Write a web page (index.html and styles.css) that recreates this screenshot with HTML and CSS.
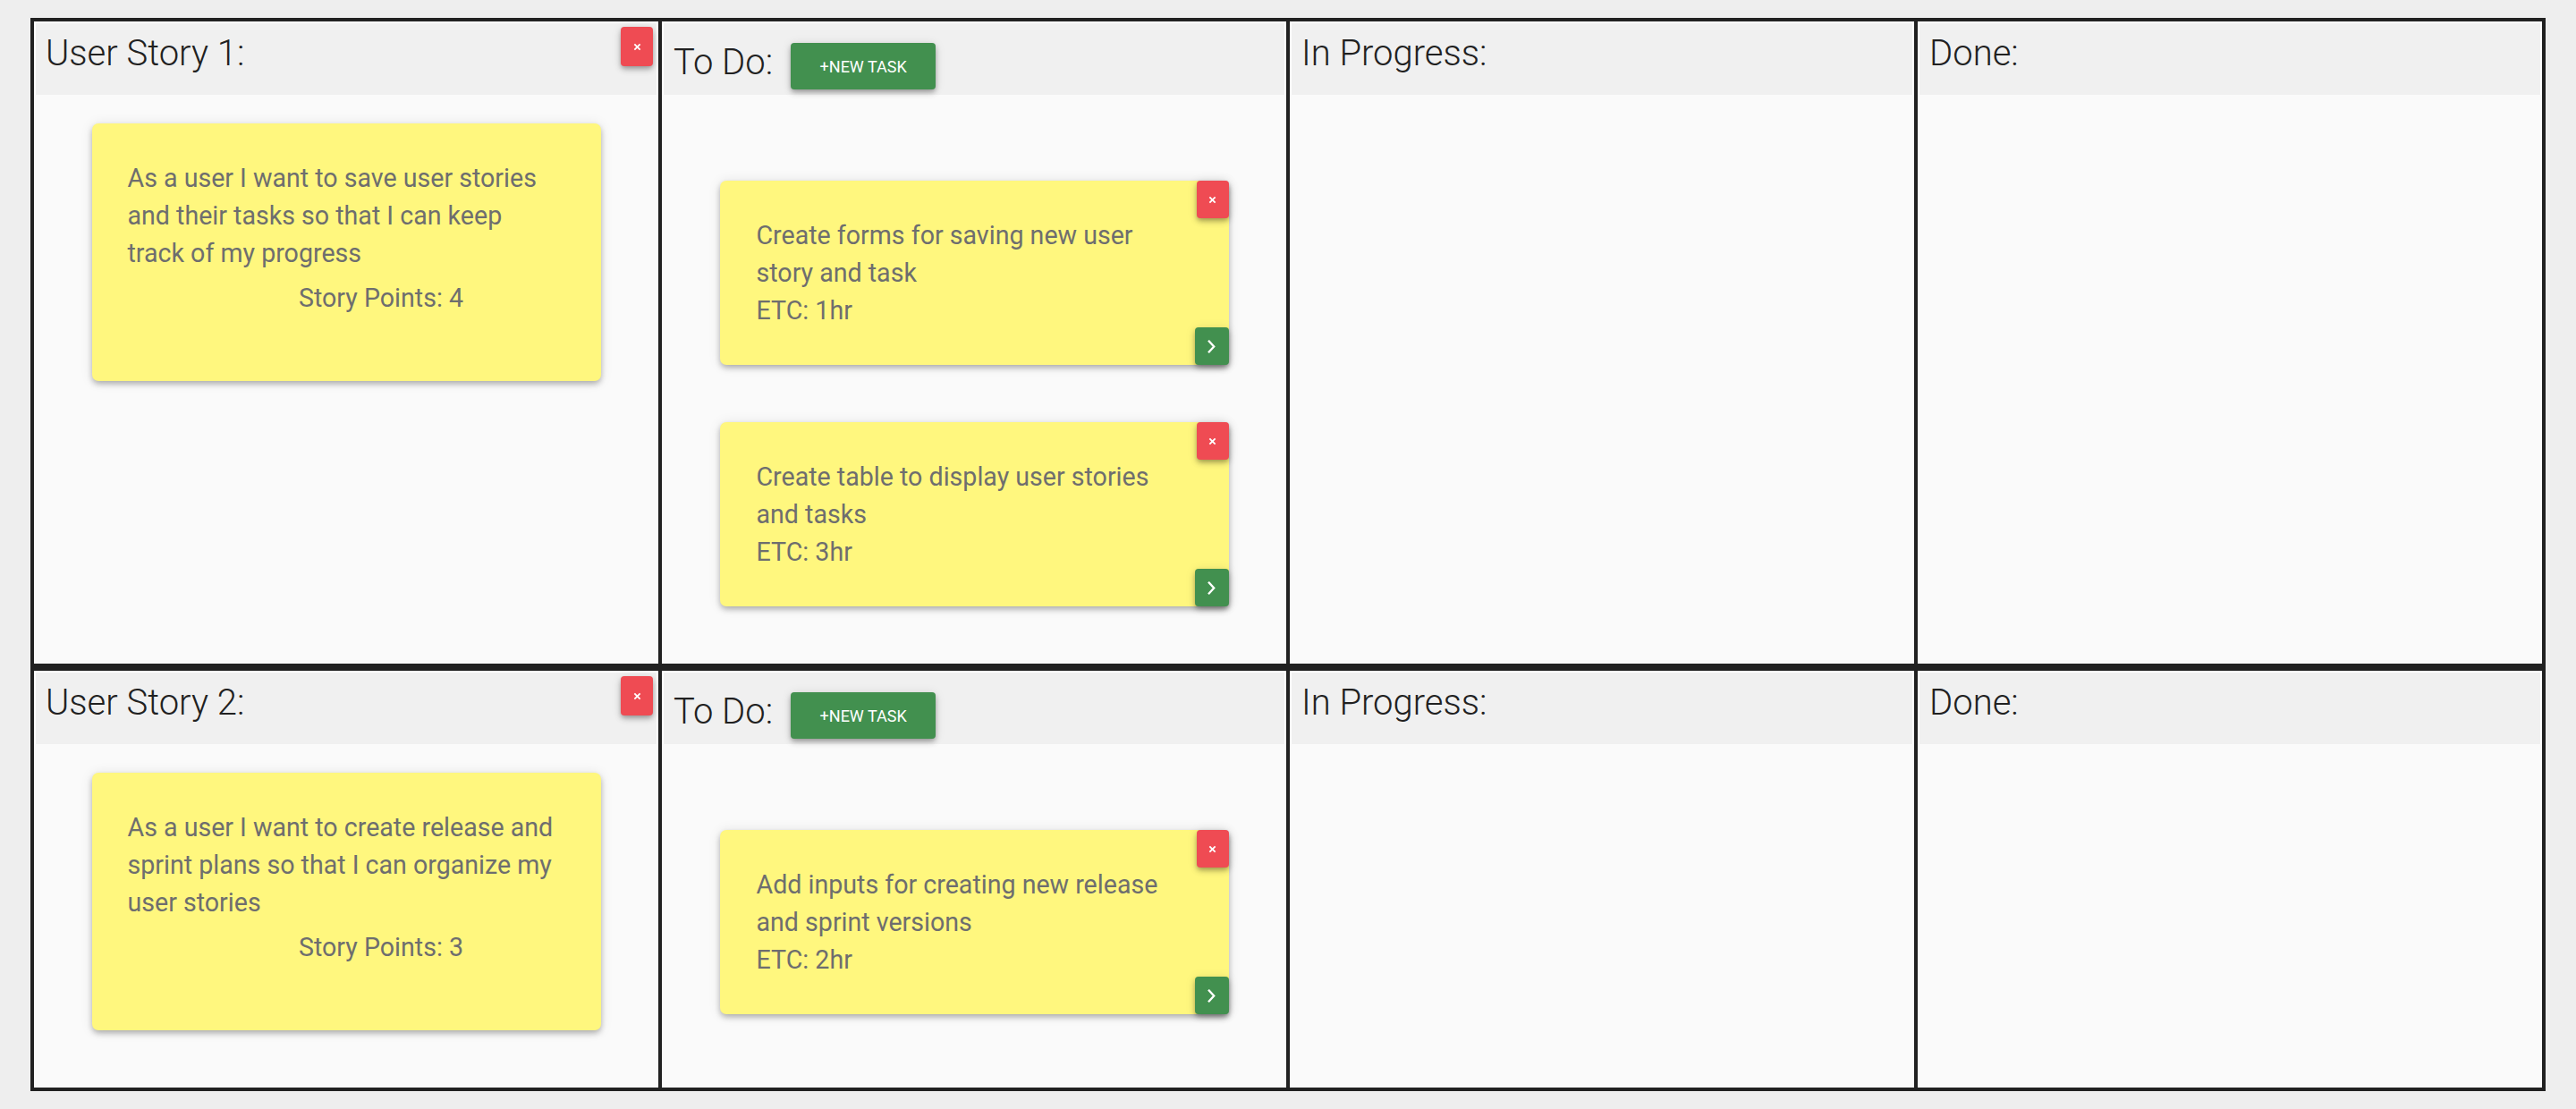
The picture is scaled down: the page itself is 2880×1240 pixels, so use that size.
FILE: index.html
```html
<!DOCTYPE html>
<html lang="en">
<head>
<meta charset="utf-8">
<title>Scrum Board</title>
<link rel="stylesheet" href="styles.css">
</head>
<body>
<main class="board">
  <section class="row">
    <div class="cell">
      <div class="head"><h2 class="title">User Story 1:</h2></div>
      <button class="btn-del story-del" aria-label="delete"><svg viewBox="0 0 10 10" class="ico-x"><path d="M1.5 1.5 L8.5 8.5 M8.5 1.5 L1.5 8.5"/></svg></button>
      <div class="story-body">
        <div class="card story">
          <p class="story-text">As a user I want to save user stories and their tasks so that I can keep track of my progress</p>
          <p class="points">Story Points: 4</p>
        </div>
      </div>
    </div>
    <div class="cell">
      <div class="head head-todo"><h2 class="title">To Do:</h2><button class="btn-new">+NEW TASK</button></div>
      <div class="todo-body">
        <div class="card task">
          <p class="task-text">Create forms for saving new user story and task</p>
          <p class="task-text">ETC: 1hr</p>
          <button class="btn-del task-del" aria-label="delete"><svg viewBox="0 0 10 10" class="ico-x"><path d="M1.5 1.5 L8.5 8.5 M8.5 1.5 L1.5 8.5"/></svg></button>
          <button class="btn-move" aria-label="move"><svg viewBox="0 0 10 16" class="ico-chev"><path d="M2 1.5 L8 8 L2 14.5"/></svg></button>
        </div>
        <div class="card task">
          <p class="task-text">Create table to display user stories and tasks</p>
          <p class="task-text">ETC: 3hr</p>
          <button class="btn-del task-del" aria-label="delete"><svg viewBox="0 0 10 10" class="ico-x"><path d="M1.5 1.5 L8.5 8.5 M8.5 1.5 L1.5 8.5"/></svg></button>
          <button class="btn-move" aria-label="move"><svg viewBox="0 0 10 16" class="ico-chev"><path d="M2 1.5 L8 8 L2 14.5"/></svg></button>
        </div>
      </div>
    </div>
    <div class="cell">
      <div class="head"><h2 class="title">In Progress:</h2></div>
    </div>
    <div class="cell">
      <div class="head"><h2 class="title">Done:</h2></div>
    </div>
  </section>

  <section class="row">
    <div class="cell">
      <div class="head"><h2 class="title">User Story 2:</h2></div>
      <button class="btn-del story-del" aria-label="delete"><svg viewBox="0 0 10 10" class="ico-x"><path d="M1.5 1.5 L8.5 8.5 M8.5 1.5 L1.5 8.5"/></svg></button>
      <div class="story-body">
        <div class="card story">
          <p class="story-text">As a user I want to create release and sprint plans so that I can organize my user stories</p>
          <p class="points">Story Points: 3</p>
        </div>
      </div>
    </div>
    <div class="cell">
      <div class="head head-todo"><h2 class="title">To Do:</h2><button class="btn-new">+NEW TASK</button></div>
      <div class="todo-body">
        <div class="card task">
          <p class="task-text">Add inputs for creating new release and sprint versions</p>
          <p class="task-text">ETC: 2hr</p>
          <button class="btn-del task-del" aria-label="delete"><svg viewBox="0 0 10 10" class="ico-x"><path d="M1.5 1.5 L8.5 8.5 M8.5 1.5 L1.5 8.5"/></svg></button>
          <button class="btn-move" aria-label="move"><svg viewBox="0 0 10 16" class="ico-chev"><path d="M2 1.5 L8 8 L2 14.5"/></svg></button>
        </div>
      </div>
    </div>
    <div class="cell">
      <div class="head"><h2 class="title">In Progress:</h2></div>
    </div>
    <div class="cell">
      <div class="head"><h2 class="title">Done:</h2></div>
    </div>
  </section>
</main>
</body>
</html>
```
FILE: styles.css
```css
* { box-sizing: border-box; }

html, body {
  margin: 0;
  padding: 0;
  background: #eeeeee;
  font-family: Roboto, "Liberation Sans", Arial, sans-serif;
}

.board {
  padding: 20px 34px;
  display: flex;
  flex-direction: column;
}

.row {
  display: grid;
  grid-template-columns: repeat(4, 1fr);
  gap: 4px;
  border: 4px solid #212121;
  background: #212121;
}

.cell {
  position: relative;
  background: #fafafa;
  min-width: 0;
}

.head {
  height: 82px;
  background: #f0f0f0;
  border: 2px solid #ffffff;
  border-bottom: 0;
  padding: 10px 11px 0;
  display: flex;
  align-items: flex-start;
}

.title {
  margin: 0;
  font-size: 40px;
  line-height: 48px;
  font-weight: 300;
  color: #212121;
  white-space: nowrap;
}

.head-todo .title {
  margin-top: 10px;
}

.btn-new {
  margin: 12px 0 0 20px;
  width: 162px;
  height: 52px;
  border: 0;
  border-radius: 4px;
  background: #42904f;
  color: #ffffff;
  font-family: Roboto, "Liberation Sans", Arial, sans-serif;
  font-size: 18px;
  font-weight: 400;
  padding: 0;
  box-shadow: 0 4px 7px rgba(0,0,0,0.16), 0 1px 12px rgba(0,0,0,0.10), 0 3px 5px -1px rgba(0,0,0,0.22);
}

.btn-del, .btn-move {
  border: 0;
  padding: 0;
  display: flex;
  align-items: center;
  justify-content: center;
  border-radius: 4px;
  box-shadow: 0 4px 7px rgba(0,0,0,0.16), 0 1px 12px rgba(0,0,0,0.10), 0 3px 5px -1px rgba(0,0,0,0.22);
}

.btn-del {
  background: #ef4b53;
}

.btn-move {
  background: #42904f;
}

.story-del {
  position: absolute;
  top: 6px;
  right: 6px;
  width: 36px;
  height: 44px;
}

.task-del {
  position: absolute;
  top: 0;
  right: 0;
  width: 36px;
  height: 42px;
}

.btn-move {
  position: absolute;
  bottom: 0;
  right: 0;
  width: 38px;
  height: 42px;
}

.ico-x {
  width: 9px;
  height: 9px;
  fill: none;
  stroke: #ffffff;
  stroke-width: 2;
}

.ico-chev {
  width: 9px;
  height: 15px;
  fill: none;
  stroke: #ffffff;
  stroke-width: 2.6;
  stroke-linecap: square;
  stroke-linejoin: miter;
}

.story-body {
  padding: 32px 0 64px;
}

.todo-body {
  padding: 96px 0 64px;
  display: flex;
  flex-direction: column;
  gap: 64px;
}

.card {
  width: 569px;
  margin: 0 auto;
  background: #fff77e;
  border-radius: 7px;
  box-shadow: 0 4px 7px rgba(0,0,0,0.12), 0 1px 14px rgba(0,0,0,0.10), 0 3px 6px -1px rgba(0,0,0,0.18);
  color: #6e6e6e;
  font-size: 28.6px;
  line-height: 42px;
}

.card p {
  margin: 0;
}

.story {
  padding: 40px 40px 72px;
}

.points {
  margin-top: 8px !important;
  padding-left: 78px;
  text-align: center;
}

.task {
  position: relative;
  padding: 40px 60px 40px 41px;
}
```
